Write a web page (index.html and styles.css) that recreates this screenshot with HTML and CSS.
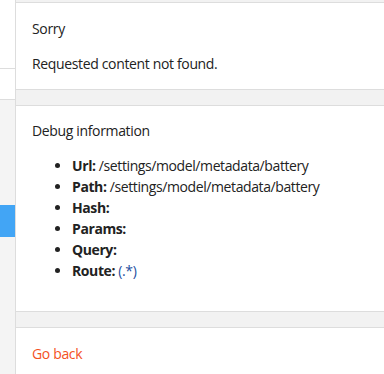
FILE: index.html
```html
<!DOCTYPE html>
<html lang="en">
<head>
  <meta charset="UTF-8">
  <meta name="viewport" content="width=device-width, initial-scale=1.0">
  <title>Not found</title>
  <link rel="stylesheet" href="styles.css">
</head>
<body>
  <aside class="sidebar">
    <div class="side-head"></div>
    <div class="side-row"></div>
    <div class="side-space"></div>
    <div class="side-active"></div>
  </aside>
  <main class="content">
    <section class="card card-message">
      <p class="title">Sorry</p>
      <p>Requested content not found.</p>
    </section>
    <section class="card card-debug">
      <p class="title">Debug information</p>
      <ul class="debug-list">
        <li><b>Url:</b> /settings/model/metadata/battery</li>
        <li><b>Path:</b> /settings/model/metadata/battery</li>
        <li><b>Hash:</b></li>
        <li><b>Params:</b></li>
        <li><b>Query:</b></li>
        <li><b>Route:</b> <span class="route">(.*)</span></li>
      </ul>
    </section>
    <section class="card card-actions">
      <a href="#" class="back">Go back</a>
    </section>
  </main>
</body>
</html>
```

FILE: styles.css
```css
body {
  margin: 0;
  height: 374px;
  overflow: hidden;
  display: flex;
  font-family: "Open Sans", "Noto Sans", sans-serif;
  font-size: 14px;
  line-height: 20px;
  letter-spacing: -0.35px;
  color: #222;
  background-color: #f2f2f2;
}
.sidebar {
  width: 15px;
  flex-shrink: 0;
  background-color: #f4f4f4;
  border-right: 1px solid #ddd;
}
.side-head {
  height: 68px;
  background-color: white;
  border-bottom: 1px solid #ddd;
}
.side-row {
  height: 30px;
  background-color: white;
  border-bottom: 1px solid #ddd;
}
.side-space {
  height: 105px;
}
.side-active {
  height: 32px;
  background-color: #42a5f5;
}
.content {
  flex: 1;
  padding-top: 2px;
}
.card {
  box-sizing: border-box;
  background-color: white;
  border-top: 1px solid #ddd;
  border-bottom: 1px solid #ddd;
  padding: 0 16px;
  margin-bottom: 15px;
}
.card p {
  margin: 0;
}
.card-message {
  height: 88px;
  padding-top: 16px;
}
.card-message .title {
  margin-bottom: 15px;
}
.card-debug {
  height: 207px;
  padding-top: 15px;
}
.debug-list {
  margin: 14px 0 0;
  padding-left: 40px;
  line-height: 21px;
  letter-spacing: -0.4px;
}
.route {
  color: #1e4fa0;
}
.card-actions {
  height: 60px;
  padding-top: 16px;
}
.back {
  color: #f4511e;
  text-decoration: none;
}
```
